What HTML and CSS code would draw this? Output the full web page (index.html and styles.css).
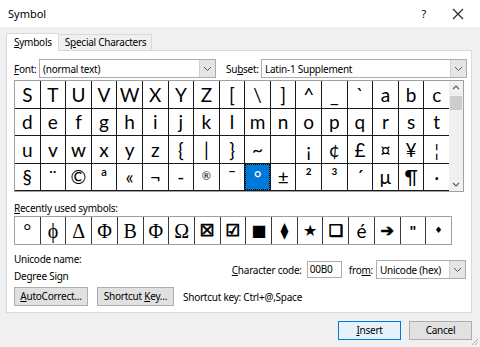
FILE: index.html
```html
<!DOCTYPE html>
<html>
<head>
<meta charset="utf-8">
<link rel="stylesheet" href="styles.css">
</head>
<body>
<div class="dialog">
  <div class="titlebar">
    <span class="title">Symbol</span>
    <span class="help">?</span>
    <svg class="close" width="12" height="12" viewBox="0 0 12 12"><path d="M1 1 L11 11 M11 1 L1 11" stroke="#222" stroke-width="1.1" fill="none"/></svg>
  </div>
  <div class="tabs">
    <div class="tab active"><u>S</u>ymbols</div>
    <div class="tab">S<u>p</u>ecial Characters</div>
  </div>
  <div class="panel">
    <div class="fontrow">
      <span class="lbl"><u>F</u>ont:</span>
      <div class="select font-sel"><span class="val">(normal text)</span><span class="arrow"><svg width="9" height="6" viewBox="0 0 9 6"><path d="M1 1 L4.5 4.5 L8 1" stroke="#555" fill="none"/></svg></span></div>
      <span class="lbl subset-lbl">Su<u>b</u>set:</span>
      <div class="select subset-sel"><span class="val">Latin-1 Supplement</span><span class="arrow"><svg width="9" height="6" viewBox="0 0 9 6"><path d="M1 1 L4.5 4.5 L8 1" stroke="#555" fill="none"/></svg></span></div>
    </div>
    <div class="gridwrap">
      <div class="grid">
        <div class="c">S</div><div class="c">T</div><div class="c">U</div><div class="c">V</div><div class="c">W</div><div class="c">X</div><div class="c">Y</div><div class="c">Z</div><div class="c">[</div><div class="c">\</div><div class="c">]</div><div class="c">^</div><div class="c">_</div><div class="c">`</div><div class="c">a</div><div class="c">b</div><div class="c">c</div>
        <div class="c">d</div><div class="c">e</div><div class="c">f</div><div class="c">g</div><div class="c">h</div><div class="c">i</div><div class="c">j</div><div class="c">k</div><div class="c">l</div><div class="c">m</div><div class="c">n</div><div class="c">o</div><div class="c">p</div><div class="c">q</div><div class="c">r</div><div class="c">s</div><div class="c">t</div>
        <div class="c">u</div><div class="c">v</div><div class="c">w</div><div class="c">x</div><div class="c">y</div><div class="c">z</div><div class="c">{</div><div class="c">|</div><div class="c">}</div><div class="c">~</div><div class="c"></div><div class="c">¡</div><div class="c">¢</div><div class="c">£</div><div class="c">¤</div><div class="c">¥</div><div class="c alt">¦</div>
        <div class="c">§</div><div class="c">¨</div><div class="c">©</div><div class="c">ª</div><div class="c">«</div><div class="c">¬</div><div class="c">-</div><div class="c reg">®</div><div class="c">¯</div><div class="c sel">°</div><div class="c">±</div><div class="c">²</div><div class="c">³</div><div class="c">´</div><div class="c">µ</div><div class="c">¶</div><div class="c">·</div>
      </div>
      <div class="scrollbar">
        <svg class="sarrow" width="14" height="14" viewBox="0 0 14 14"><path d="M4 8 L7 5 L10 8" stroke="#606060" stroke-width="1.2" fill="none"/></svg>
        <div class="thumb"></div>
        <div class="track"></div>
        <svg class="sarrow" width="14" height="14" viewBox="0 0 14 14"><path d="M4 6 L7 9 L10 6" stroke="#606060" stroke-width="1.2" fill="none"/></svg>
      </div>
    </div>
    <div class="reclabel"><u>R</u>ecently used symbols:</div>
    <div class="recent">
      <div class="r">°</div><div class="r">ϕ</div><div class="r">Δ</div><div class="r">Φ</div><div class="r">Β</div><div class="r">Φ</div><div class="r">Ω</div><div class="r sym bold">☒</div><div class="r sym bold">☑</div><div class="r sym">■</div><div class="r sym">⧫</div><div class="r sym">★</div><div class="r sym bold">❑</div><div class="r sans">é</div><div class="r sym bold">➔</div><div class="r sans small">"</div><div class="r sym tiny">♦</div>
    </div>
    <div class="info">
      <div class="names">
        <div>Unicode name:</div>
        <div>Degree Sign</div>
      </div>
      <div class="codegroup">
        <span><u>C</u>haracter code:</span>
        <div class="input">00B0</div>
        <span class="from">fro<u>m</u>:</span>
        <div class="select from-sel"><span class="val">Unicode (hex)</span><span class="arrow"><svg width="9" height="6" viewBox="0 0 9 6"><path d="M1 1 L4.5 4.5 L8 1" stroke="#555" fill="none"/></svg></span></div>
      </div>
    </div>
    <div class="btnrow">
      <div class="btn auto"><u>A</u>utoCorrect...</div>
      <div class="btn shortcut">Shortcut <u>K</u>ey...</div>
      <span class="sk">Shortcut key: Ctrl+@,Space</span>
    </div>
  </div>
  <div class="actions">
    <div class="btn primary"><u>I</u>nsert</div>
    <div class="btn">Cancel</div>
  </div>
  <svg class="grip" width="8" height="8" viewBox="0 0 8 8"><path d="M7 1 L1 7 M7 4 L4 7" stroke="#b0b0b0" stroke-width="1" fill="none"/></svg>
</div>
</body>
</html>
```
FILE: styles.css
```css
html, body {
  margin: 0;
  padding: 0;
}
body {
  width: 480px;
  height: 347px;
  background: #f0f0f0;
  font-family: "Noto Sans", "DejaVu Sans", sans-serif;
  font-size: 10px;
  letter-spacing: -0.25px;
  color: #000;
  overflow: hidden;
}
.dialog {
  position: relative;
  width: 480px;
  height: 347px;
}
.titlebar {
  height: 27px;
  background: #fff;
  display: flex;
  align-items: center;
  padding-left: 8px;
  box-sizing: border-box;
}
.title {
  font-size: 11px;
  letter-spacing: 0;
  flex: 1;
}
.help {
  font-size: 11px;
  margin-right: 26px;
}
.close {
  margin-right: 16px;
}
.tabs {
  display: flex;
  align-items: flex-end;
  margin-left: 6px;
  margin-top: 5px;
  height: 18px;
}
.tab {
  height: 15px;
  line-height: 15px;
  padding: 0 5px 0 6px;
  border: 1px solid #d9d9d9;
  border-bottom: none;
  background: #f0f0f0;
  box-sizing: content-box;
  margin-left: -1px;
}
.tab.active {
  height: 17px;
  line-height: 17px;
  background: #fff;
  margin-left: 0;
  padding: 0 6px 0 7px;
  z-index: 1;
  margin-bottom: -1px;
}
.panel {
  margin-left: 6px;
  width: 466px;
  height: 263px;
  box-sizing: border-box;
  background: #fff;
  border: 1px solid #d9d9d9;
  padding: 8px 7px 0 7px;
}
.fontrow {
  display: flex;
  align-items: center;
  height: 19px;
}
.lbl {
  width: 25px;
}
.select {
  display: flex;
  align-items: center;
  height: 19px;
  box-sizing: border-box;
  border: 1px solid #adadad;
  background: #fff;
}
.select .val {
  flex: 1;
  padding-left: 3px;
  white-space: nowrap;
}
.select .arrow {
  width: 15px;
  height: 17px;
  display: flex;
  align-items: center;
  justify-content: center;
  background: #e5e5e5;
  border-left: 1px solid #cfcfcf;
}
.font-sel {
  width: 177px;
}
.subset-lbl {
  margin-left: 10px;
  width: 35px;
}
.subset-sel {
  width: 206px;
  margin-right: -3px;
}
.gridwrap {
  margin-top: 2px;
  width: 450px;
  height: 112px;
  box-sizing: border-box;
  border: 1px solid #a0a0a0;
  display: flex;
}
.grid {
  width: 434px;
  height: 110px;
  display: grid;
  grid-template-columns: repeat(17, 1fr);
  grid-template-rows: repeat(4, 1fr);
  gap: 1px;
  background: #1a1a1a;
  border-bottom: 1px solid #1a1a1a;
  box-sizing: border-box;
}
.c {
  background: #fff;
  display: flex;
  align-items: center;
  justify-content: center;
  font-family: Lato, "Noto Sans", sans-serif;
  font-size: 19px;
  letter-spacing: 0;
  line-height: 1;
  color: #000;
}
.c.alt {
  font-family: "Noto Sans", sans-serif;
  font-size: 17px;
}
.c.reg {
  font-size: 11px;
  align-items: flex-start;
  padding-top: 6px;
  box-sizing: border-box;
}
.c.sel {
  background: #0078d7;
  color: #fff;
  outline: 1px dotted #000;
  outline-offset: -1px;
  align-items: flex-start;
  padding-top: 4px;
  box-sizing: border-box;
}
.scrollbar {
  width: 14px;
  height: 110px;
  background: #f0f0f0;
  display: flex;
  flex-direction: column;
}
.sarrow {
  display: block;
}
.thumb {
  margin-top: 1px;
  height: 14px;
  margin-left: 1px;
  margin-right: 1px;
  background: #cdcdcd;
}
.track {
  flex: 1;
}
.reclabel {
  margin-top: 9px;
  height: 15px;
  line-height: 15px;
}
.recent {
  width: 438px;
  height: 29px;
  box-sizing: border-box;
  border: 1px solid #a0a0a0;
  display: grid;
  grid-template-columns: repeat(17, 1fr);
  gap: 1px;
  background: #3a3a3a;
}
.r {
  background: #fff;
  display: flex;
  align-items: center;
  justify-content: center;
  font-family: "Liberation Serif", serif;
  font-size: 20px;
  letter-spacing: 0;
  line-height: 1;
}
.r.sym {
  font-family: "DejaVu Sans", sans-serif;
  font-size: 16px;
}
.r.bold {
  -webkit-text-stroke: 0.8px #000;
}
.r.sans {
  font-family: Lato, sans-serif;
  font-size: 19px;
}
.r.small {
  font-size: 16px;
  font-weight: bold;
}
.r.tiny {
  font-size: 9px;
}
.info {
  margin-top: 6px;
  display: flex;
  justify-content: space-between;
  height: 34px;
}
.names div {
  line-height: 17px;
}
.codegroup {
  display: flex;
  align-items: center;
  height: 19px;
  margin-top: 9px;
  margin-right: -2px;
}
.input {
  margin-left: 5px;
  width: 35px;
  height: 17px;
  line-height: 15px;
  box-sizing: border-box;
  border: 1px solid #adadad;
  padding-left: 2px;
}
.from {
  margin-left: 7px;
  margin-right: 3px;
}
.from-sel {
  width: 90px;
}
.btnrow {
  margin-top: 2px;
  display: flex;
  align-items: center;
}
.btn {
  height: 19px;
  line-height: 17px;
  box-sizing: border-box;
  border: 1px solid #adadad;
  background: #e1e1e1;
  text-align: center;
}
.auto {
  width: 74px;
}
.shortcut {
  width: 77px;
  margin-left: 9px;
}
.sk {
  margin-left: 9px;
}
.actions {
  display: flex;
  justify-content: flex-end;
  gap: 8px;
  margin-top: 8px;
  margin-right: 8px;
}
.actions .btn {
  width: 63px;
}
.actions .btn.primary {
  border-color: #0078d7;
  background: #e5f1fb;
}
.grip {
  position: absolute;
  right: 1px;
  bottom: 1px;
}
```
